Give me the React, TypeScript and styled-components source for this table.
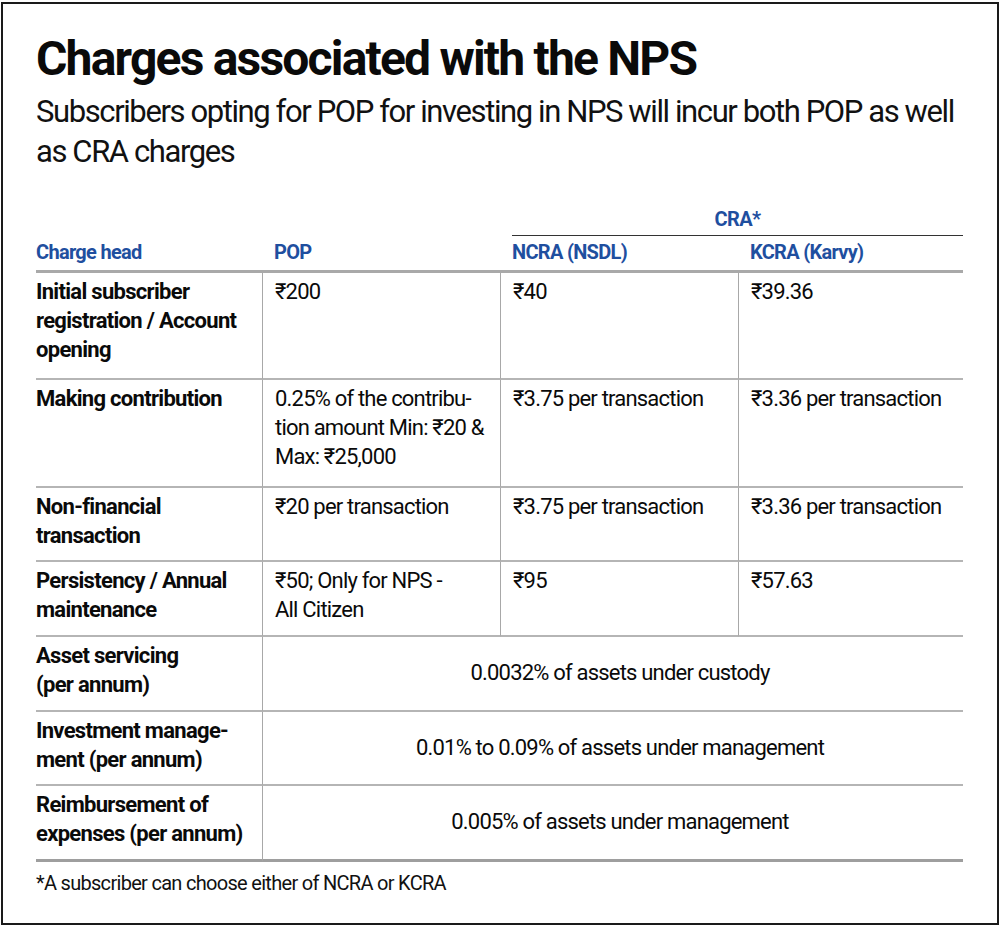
import React from 'react';
import styled, { createGlobalStyle } from 'styled-components';

const Global = createGlobalStyle`
  html, body { margin: 0; padding: 0; background: #fff; }
  body {
    font-family: Roboto, "Liberation Sans", "Noto Sans", sans-serif;
    color: #111;
  }
`;

const Card = styled.div`
  box-sizing: border-box;
  width: 998px;
  height: 923px;
  margin: 2px 0 0 1px;
  border: 2px solid #1a1a1a;
  padding: 26px 34px 0 33px;
`;

const Title = styled.h1`
  margin: 0;
  font-size: 48px;
  line-height: 57px;
  font-weight: 700;
  letter-spacing: -1.8px;
  color: #0a0a0a;
`;

const Subtitle = styled.p`
  margin: 5px 0 0;
  font-size: 31px;
  line-height: 40px;
  font-weight: 400;
  letter-spacing: -1.4px;
  white-space: nowrap;
  color: #111;
`;

const Table = styled.div`
  display: grid;
  grid-template-columns: 226px 238px 238px 225px;
  grid-template-rows: 36px 37px 107px 108px 74px 75px 75px 74px 76px;
  margin-top: 28px;
`;

const Spacer = styled.div`
  grid-column: 1 / 3;
`;

const GroupHead = styled.div`
  grid-column: 3 / 5;
  margin-left: 12px;
  display: flex;
  align-items: flex-end;
  justify-content: center;
  padding-bottom: 4px;
  border-bottom: 1px solid #333;
  font-size: 20px;
  line-height: 24px;
  font-weight: 700;
  letter-spacing: -0.6px;
  color: #1f4f9f;
`;

const HeadCell = styled.div<{ $first?: boolean }>`
  display: flex;
  align-items: flex-end;
  padding: 0 0 6px ${(p) => (p.$first ? '0' : '12px')};
  border-bottom: 3px solid #a9a9a9;
  font-size: 20px;
  line-height: 24px;
  font-weight: 700;
  letter-spacing: -0.7px;
  color: #1f4f9f;
`;

const Cell = styled.div<{ $first?: boolean; $last?: boolean }>`
  box-sizing: border-box;
  padding: 4px 4px 0 ${(p) => (p.$first ? '0' : '12px')};
  border-bottom: ${(p) => (p.$last ? '3px solid #9e9e9e' : '2px solid #b5b5b5')};
  border-left: ${(p) => (p.$first ? 'none' : '1px solid #a8a8a8')};
  font-size: 22px;
  line-height: 29px;
  font-weight: ${(p) => (p.$first ? 700 : 400)};
  letter-spacing: ${(p) => (p.$first ? '-0.7px' : '-0.8px')};
  white-space: nowrap;
  color: #0a0a0a;
`;

const SpanCell = styled(Cell)`
  grid-column: 2 / 5;
  display: flex;
  align-items: center;
  justify-content: center;
  padding: 0 0 2px 14px;
`;

const Footnote = styled.p`
  margin: 9px 0 0;
  font-size: 20px;
  line-height: 24px;
  letter-spacing: -0.7px;
  color: #111;
`;

type Row = { head: React.ReactNode; cells: React.ReactNode[] | string };

const rows: Row[] = [
  {
    head: (
      <>
        Initial subscriber
        <br />
        registration / Account
        <br />
        opening
      </>
    ),
    cells: ['₹200', '₹40', '₹39.36'],
  },
  {
    head: 'Making contribution',
    cells: [
      <>
        0.25% of the contribu-
        <br />
        tion amount Min: ₹20 &amp;
        <br />
        Max: ₹25,000
      </>,
      '₹3.75 per transaction',
      '₹3.36 per transaction',
    ],
  },
  {
    head: (
      <>
        Non-financial
        <br />
        transaction
      </>
    ),
    cells: ['₹20 per transaction', '₹3.75 per transaction', '₹3.36 per transaction'],
  },
  {
    head: (
      <>
        Persistency / Annual
        <br />
        maintenance
      </>
    ),
    cells: [
      <>
        ₹50; Only for NPS -
        <br />
        All Citizen
      </>,
      '₹95',
      '₹57.63',
    ],
  },
  {
    head: (
      <>
        Asset servicing
        <br />
        (per annum)
      </>
    ),
    cells: '0.0032% of assets under custody',
  },
  {
    head: (
      <>
        Investment manage-
        <br />
        ment (per annum)
      </>
    ),
    cells: '0.01% to 0.09% of assets under management',
  },
  {
    head: (
      <>
        Reimbursement of
        <br />
        expenses (per annum)
      </>
    ),
    cells: '0.005% of assets under management',
  },
];

export default function App() {
  return (
    <>
      <Global />
      <Card>
        <Title>Charges associated with the NPS</Title>
        <Subtitle>
          Subscribers opting for POP for investing in NPS will incur both POP as well
          <br />
          as CRA charges
        </Subtitle>
        <Table>
          <Spacer />
          <GroupHead>CRA*</GroupHead>
          <HeadCell $first>Charge head</HeadCell>
          <HeadCell>POP</HeadCell>
          <HeadCell>NCRA (NSDL)</HeadCell>
          <HeadCell>KCRA (Karvy)</HeadCell>
          {rows.map((r, i) => {
            const last = i === rows.length - 1;
            return (
              <React.Fragment key={i}>
                <Cell $first $last={last}>
                  {r.head}
                </Cell>
                {typeof r.cells === 'string' ? (
                  <SpanCell $last={last}>{r.cells}</SpanCell>
                ) : (
                  r.cells.map((c, j) => (
                    <Cell key={j} $last={last}>
                      {c}
                    </Cell>
                  ))
                )}
              </React.Fragment>
            );
          })}
        </Table>
        <Footnote>*A subscriber can choose either of NCRA or KCRA</Footnote>
      </Card>
    </>
  );
}
